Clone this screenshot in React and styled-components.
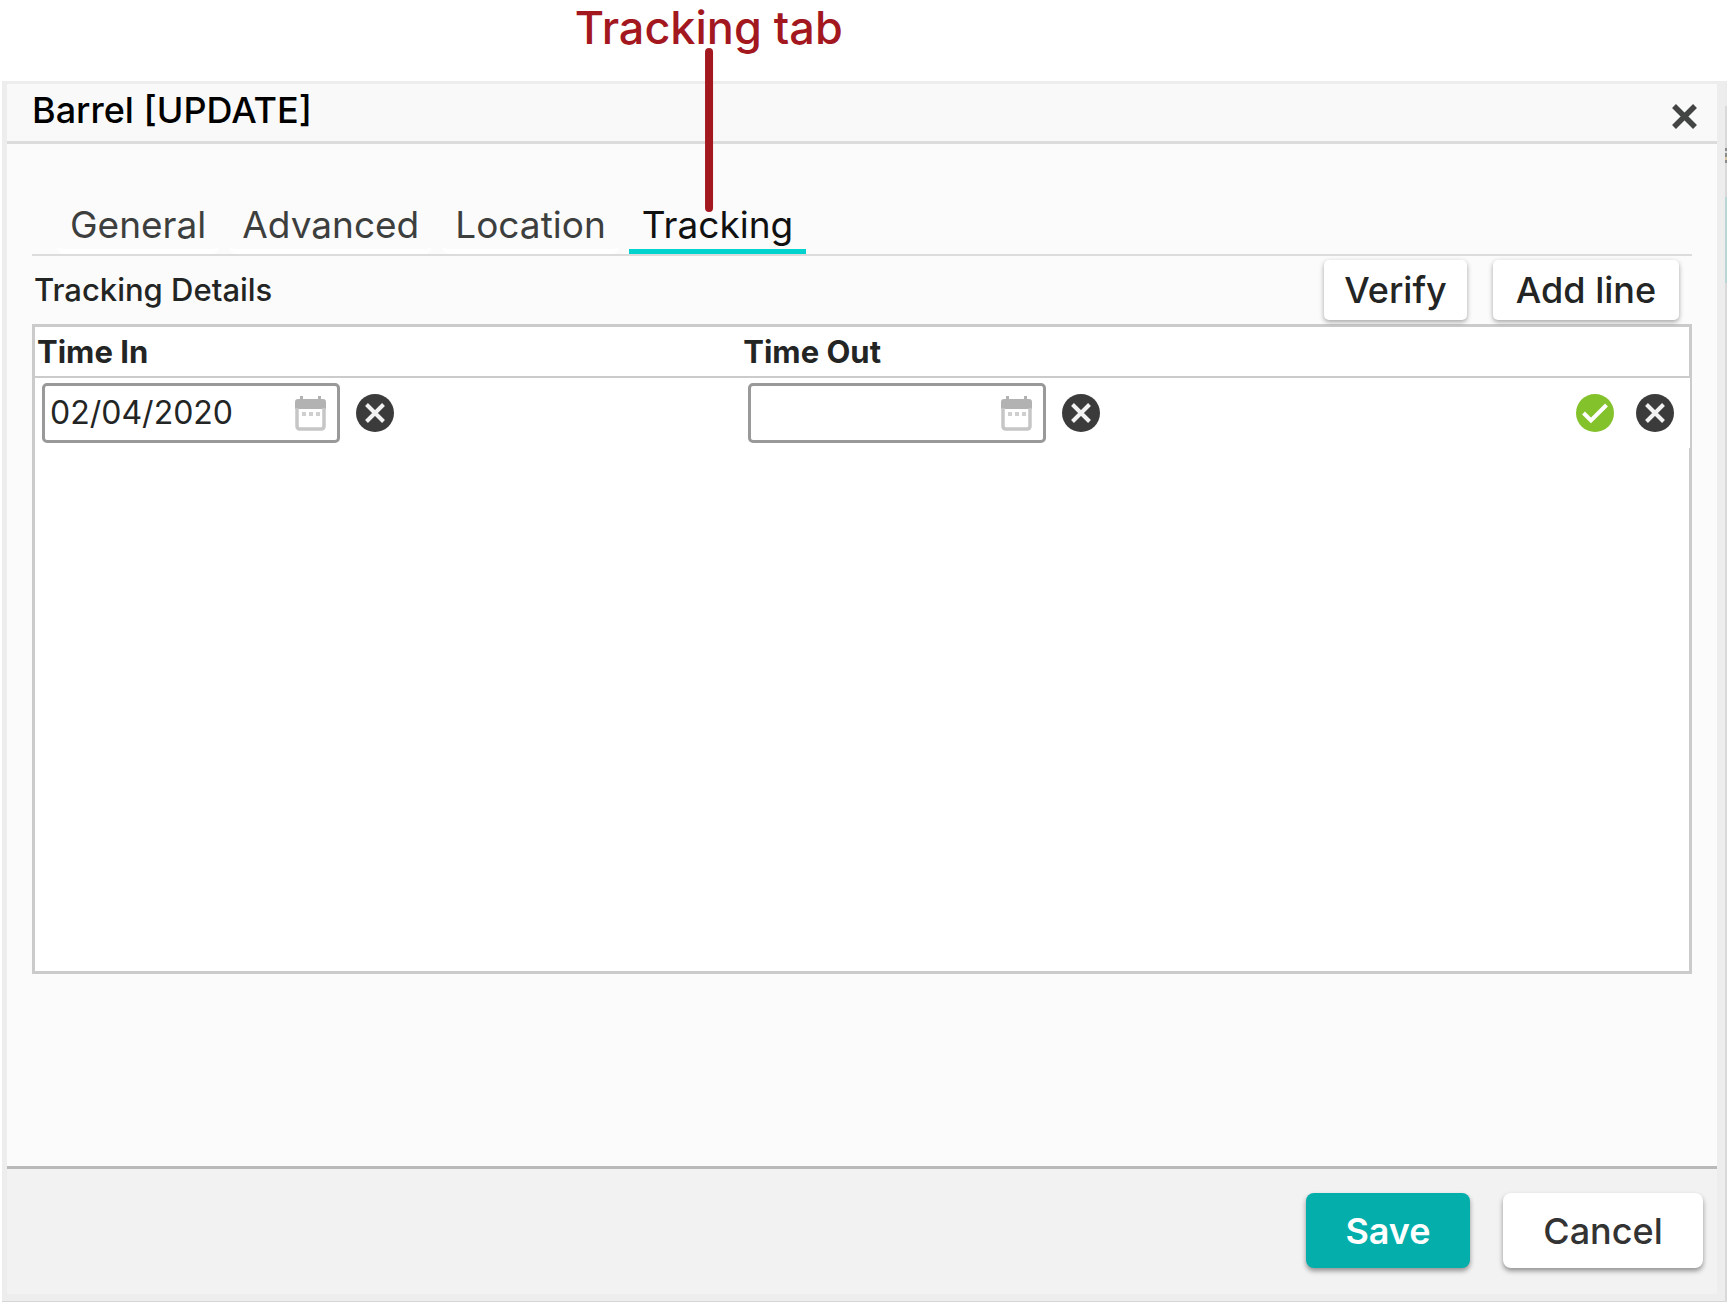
import React, { useState } from 'react';
import styled, { createGlobalStyle } from 'styled-components';

const GlobalStyle = createGlobalStyle`
  * {
    box-sizing: border-box;
  }

  body {
    margin: 0;
    background: #fff;
    color: #232524;
    font-family: Inter, 'Liberation Sans', sans-serif;
  }

  button, input {
    font-family: inherit;
    color: inherit;
  }
`;

const Page = styled.div`
  display: flex;
  min-height: 100vh;
  padding: 81px 3px 0 2px;
`;

const Dialog = styled.section`
  flex: 1;
  display: flex;
  flex-direction: column;
  border: solid #ededed;
  border-width: 3px 8px 7px 5px;
  box-shadow: 0 1px #d6d6d6;
  margin-bottom: 1px;
`;

const PageEdge = styled.div`
  width: 2px;
  background: linear-gradient(
    #ebebeb 0 25px,
    #d9d9d9 25px 67px,
    #8c8c8c 67px 70px,
    #d9d9d9 70px 72px,
    #8c8c8c 72px 76px,
    #dcc8a8 76px 79px,
    #8c8c8c 79px 82px,
    #d9d9d9 82px 116px,
    #b9d6d4 116px 202px,
    #d9d9d9 202px
  );
`;

const Header = styled.header`
  display: flex;
  align-items: center;
  justify-content: space-between;
  height: 60px;
  padding: 0 18px 0 25px;
  background: #f9f9f9;
  border-bottom: 3px solid #dcdcdc;
`;

const Title = styled.h1`
  margin: 0;
  padding-bottom: 6px;
  font-size: 36px;
  line-height: 44px;
  font-weight: 500;
  color: #000;
`;

const IconButton = styled.button`
  display: flex;
  padding: 0;
  border: 0;
  background: none;
  cursor: pointer;
`;

const CloseButton = styled(IconButton)`
  padding: 7px 1px 0;
`;

const Body = styled.div`
  flex: 1;
  padding: 56px 25px 80px;
  background: #fbfbfb;
`;

const TabList = styled.div`
  display: flex;
  gap: 10px;
  padding-left: 25px;
  border-bottom: 2px solid #dcdcdc;
`;

const TabItem = styled.div`
  position: relative;
`;

const Tab = styled.button`
  display: block;
  height: 54px;
  padding: 0 13px;
  border: 0;
  border-bottom: 5px solid ${({ $active }) => ($active ? '#00d2cd' : '#fff')};
  border-radius: ${({ $active }) => ($active ? '0' : '0 0 8px 8px')};
  background: none;
  font-size: 37px;
  line-height: 44px;
  color: ${({ $active }) => ($active ? '#111' : '#3d3f3e')};
  cursor: pointer;
`;

const Callout = styled.div`
  position: absolute;
  bottom: 42px;
  left: 80px;
  display: flex;
  flex-direction: column;
  align-items: center;
  transform: translateX(-50%);
  font-size: 45px;
  line-height: 40px;
  font-weight: 500;
  white-space: nowrap;
  color: #a3171f;
  pointer-events: none;
`;

const CalloutLine = styled.div`
  width: 8px;
  height: 164px;
  border-radius: 4px;
  background: #a3171f;
`;

const Toolbar = styled.div`
  display: flex;
  align-items: center;
  gap: 26px;
  height: 68px;
  padding: 0 13px 0 2px;
`;

const Subtitle = styled.h2`
  flex: 1;
  margin: 0;
  font-size: 31px;
  line-height: 36px;
  font-weight: 500;
`;

const Button = styled.button`
  min-width: ${({ $width }) => $width}px;
  height: 60px;
  padding: 0 16px;
  border: 0;
  border-radius: 5px;
  background: #fff;
  box-shadow: 0 2px 5px rgba(0, 0, 0, 0.35);
  font-size: 36px;
  line-height: 44px;
  font-weight: 500;
  white-space: nowrap;
  cursor: pointer;
`;

const FooterButton = styled(Button)`
  height: 75px;
  border-radius: 8px;
  background: ${({ $primary }) => ($primary ? '#03aeab' : '#fff')};
  box-shadow: 0 3px 5px rgba(0, 0, 0, 0.4);
  color: ${({ $primary }) => ($primary ? '#fff' : '#333')};
  font-weight: ${({ $primary }) => ($primary ? 600 : 500)};
`;

const Grid = styled.div`
  min-height: 650px;
  border: 3px solid #cbcbcb;
  background: #fff;
`;

const Table = styled.table`
  width: 100%;
  table-layout: fixed;
  border-collapse: separate;
  border-spacing: 0;
`;

const HeadCell = styled.th`
  width: ${({ $width }) => $width || 'auto'};
  height: 51px;
  padding: 0 2px;
  border-bottom: 2px solid #cbcbcb;
  text-align: left;
  font-size: 31px;
  line-height: 36px;
  font-weight: 700;
`;

const Cell = styled.td`
  height: 70px;
  padding: 5px 7px;
  vertical-align: top;

  &:last-child {
    box-shadow: 1px 0 #fff;
  }
`;

const CellRow = styled.div`
  display: flex;
  align-items: center;
  justify-content: ${({ $end }) => ($end ? 'flex-end' : 'flex-start')};
  gap: ${({ $end }) => ($end ? '20px' : '15px')};
  height: 60px;
  padding-right: ${({ $end }) => ($end ? '7px' : '0')};
`;

const Field = styled.div`
  display: flex;
  align-items: center;
  width: 298px;
  height: 60px;
  padding: 0 11px 0 5px;
  border: 3px solid #999;
  border-radius: 5px;
  background: #fff;
`;

const DateInput = styled.input`
  flex: 1;
  min-width: 0;
  padding: 0;
  border: 0;
  outline: 0;
  background: none;
  font-size: 32px;
  line-height: 36px;
`;

const Footer = styled.footer`
  display: flex;
  justify-content: flex-end;
  gap: 33px;
  padding: 24px 14px 26px;
  border-top: 3px solid #b9b9b9;
  background: #f2f2f2;
`;

const CloseIcon = () => (
  <svg width="27" height="27" viewBox="0 0 27 27" aria-hidden="true">
    <path d="M3 3L24 24M24 3L3 24" stroke="#434544" strokeWidth="5.5" />
  </svg>
);

const CalendarIcon = () => (
  <svg width="31" height="35" viewBox="0 0 31 35" aria-hidden="true">
    <path d="M5 0h3v3h15V0h3v3h2q3 0 3 3v7H0V6q0-3 3-3h2z" fill="#b1b2b1" />
    <path d="M2 12v18q0 3 3 3h21q3 0 3-3V12" fill="none" stroke="#c6c6c6" strokeWidth="3.5" />
    <path d="M7 16h4v4H7zM14 16h4v4h-4zM21 16h4v4h-4z" fill="#cfcfcf" />
  </svg>
);

const RemoveIcon = () => (
  <svg width="40" height="40" viewBox="0 0 40 40" aria-hidden="true">
    <circle cx="20" cy="20" r="19" fill="#3a3b3a" />
    <path d="M11.5 11.5L28.5 28.5M28.5 11.5L11.5 28.5" stroke="#f2f2f2" strokeWidth="4" />
  </svg>
);

const CheckIcon = () => (
  <svg width="40" height="40" viewBox="0 0 40 40" aria-hidden="true">
    <circle cx="20" cy="20" r="19" fill="#84c22c" />
    <path d="M8.5 20L16 27.5L31.5 12" fill="none" stroke="#fff" strokeWidth="4" />
  </svg>
);

const tabs = ['General', 'Advanced', 'Location', 'Tracking'];

const DateField = ({ label, value, onChange }) => (
  <CellRow>
    <Field>
      <DateInput
        type="text"
        aria-label={label}
        value={value}
        onChange={(e) => onChange(e.target.value)}
      />
      <IconButton type="button" aria-label={`Pick ${label}`}>
        <CalendarIcon />
      </IconButton>
    </Field>
    <IconButton type="button" aria-label={`Clear ${label}`} onClick={() => onChange('')}>
      <RemoveIcon />
    </IconButton>
  </CellRow>
);

const App = () => {
  const [active, setActive] = useState('Tracking');
  const [timeIn, setTimeIn] = useState('02/04/2020');
  const [timeOut, setTimeOut] = useState('');

  return (
    <>
      <GlobalStyle />
      <Page>
        <Dialog role="dialog" aria-labelledby="dialog-title">
          <Header>
            <Title id="dialog-title">Barrel [UPDATE]</Title>
            <CloseButton type="button" aria-label="Close">
              <CloseIcon />
            </CloseButton>
          </Header>
          <Body>
            <TabList role="tablist">
              {tabs.map((tab) => (
                <TabItem key={tab} role="presentation">
                  <Tab
                    type="button"
                    role="tab"
                    aria-selected={tab === active}
                    $active={tab === active}
                    onClick={() => setActive(tab)}
                  >
                    {tab}
                  </Tab>
                  {tab === 'Tracking' && (
                    <Callout>
                      Tracking tab
                      <CalloutLine />
                    </Callout>
                  )}
                </TabItem>
              ))}
            </TabList>
            <Toolbar>
              <Subtitle>Tracking Details</Subtitle>
              <Button type="button" $width={143}>Verify</Button>
              <Button type="button" $width={186}>Add line</Button>
            </Toolbar>
            <Grid>
              <Table>
                <thead>
                  <tr>
                    <HeadCell $width="42.7%">Time In</HeadCell>
                    <HeadCell>Time Out</HeadCell>
                    <HeadCell $width="140px" aria-label="Actions" />
                  </tr>
                </thead>
                <tbody>
                  <tr>
                    <Cell>
                      <DateField label="Time In" value={timeIn} onChange={setTimeIn} />
                    </Cell>
                    <Cell>
                      <DateField label="Time Out" value={timeOut} onChange={setTimeOut} />
                    </Cell>
                    <Cell>
                      <CellRow $end>
                        <IconButton type="button" aria-label="Confirm line">
                          <CheckIcon />
                        </IconButton>
                        <IconButton type="button" aria-label="Remove line">
                          <RemoveIcon />
                        </IconButton>
                      </CellRow>
                    </Cell>
                  </tr>
                </tbody>
              </Table>
            </Grid>
          </Body>
          <Footer>
            <FooterButton type="button" $width={164} $primary>Save</FooterButton>
            <FooterButton type="button" $width={200}>Cancel</FooterButton>
          </Footer>
        </Dialog>
        <PageEdge />
      </Page>
    </>
  );
};

export default App;
